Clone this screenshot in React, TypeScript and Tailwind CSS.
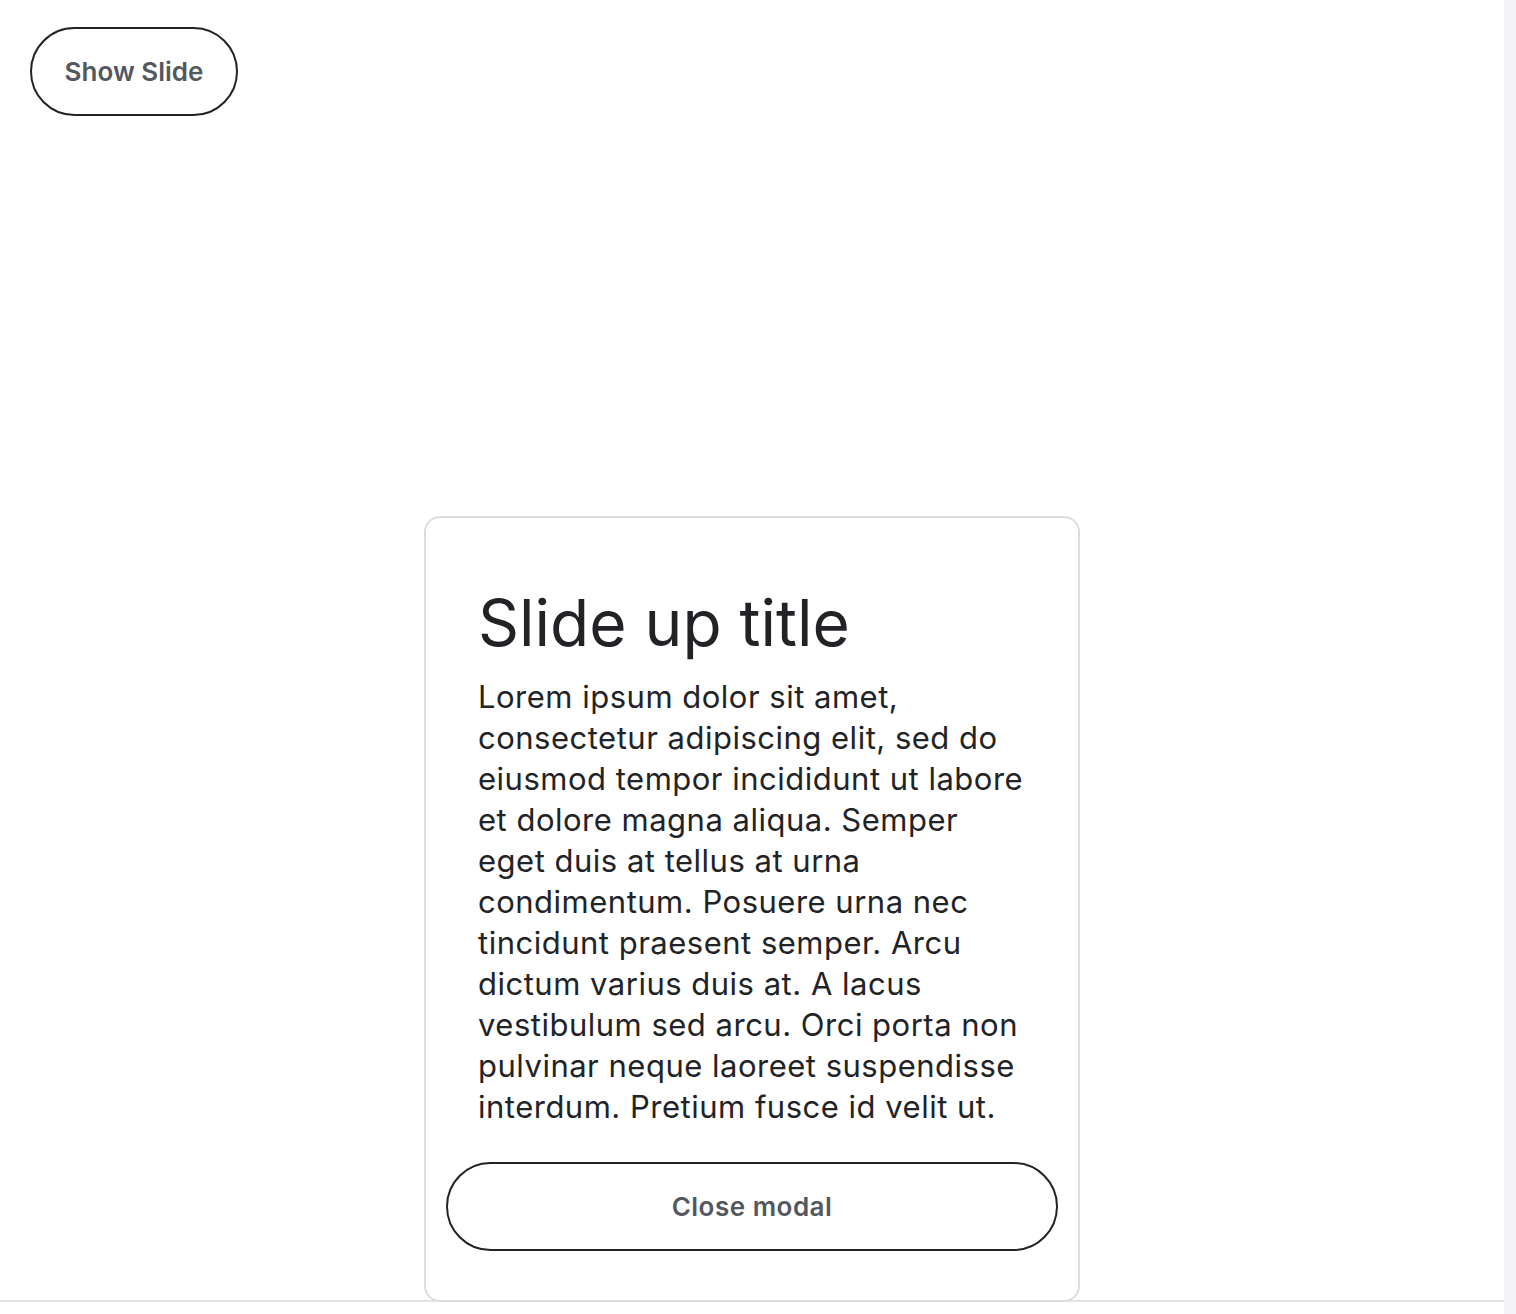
import React from "react";

const lines = [
  "Lorem ipsum dolor sit amet,",
  "consectetur adipiscing elit, sed do",
  "eiusmod tempor incididunt ut labore",
  "et dolore magna aliqua. Semper",
  "eget duis at tellus at urna",
  "condimentum. Posuere urna nec",
  "tincidunt praesent semper. Arcu",
  "dictum varius duis at. A lacus",
  "vestibulum sed arcu. Orci porta non",
  "pulvinar neque laoreet suspendisse",
  "interdum. Pretium fusce id velit ut.",
];

export default function App() {
  return (
    <div className="flex h-[1314px] w-full bg-white font-['Inter',sans-serif]">
      <div className="flex flex-1 flex-col">
        <div className="flex h-[1302px] flex-col border-b-2 border-[#e3e3e6]">
          <div className="pl-[30px] pt-[27px]">
            <button className="h-[89px] w-[208px] rounded-full border-2 border-[#222326] text-[26px] font-semibold text-[#53575e]">
              Show Slide
            </button>
          </div>
          <div className="mx-auto mb-[-2px] mt-auto flex h-[786px] w-[656px] flex-col rounded-[16px] border-2 border-[#dcdce0] bg-white px-5 pb-[49px]">
            <div className="flex flex-1 flex-col pl-8 pr-6 pt-[67px] text-[#222326]">
              <h1 className="text-[64px] leading-[76px] font-normal">Slide up title</h1>
              <div className="mt-[15px] text-[31px] leading-[41px] tracking-[0.5px]">
                {lines.map((l) => (
                  <div key={l} className="whitespace-nowrap">{l}</div>
                ))}
              </div>
            </div>
            <button className="h-[89px] w-full shrink-0 rounded-full border-2 border-[#222326] text-[26px] font-semibold tracking-[0.5px] text-[#53575e]">
              Close modal
            </button>
          </div>
        </div>
      </div>
      <div className="w-[12px] bg-[#f3f3f8]" />
    </div>
  );
}
